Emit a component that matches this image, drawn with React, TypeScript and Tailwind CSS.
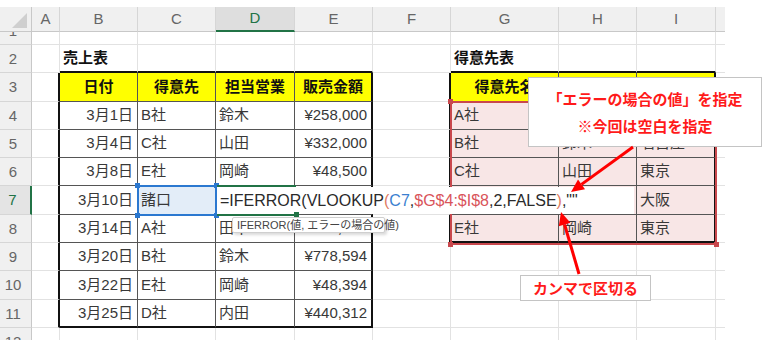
import React from 'react';
import clsx from 'clsx';

type Cell = { t: string; a?: 'l' | 'r' | 'c'; b?: boolean };

const LETTERS = ['', 'A', 'B', 'C', 'D', 'E', 'F', 'G', 'H', 'I', ''];

const data: Record<string, Cell> = {
  '2-2': { t: '売上表', b: true },
  '2-7': { t: '得意先表', b: true },
  '3-2': { t: '日付', a: 'c', b: true },
  '3-3': { t: '得意先', a: 'c', b: true },
  '3-4': { t: '担当営業', a: 'c', b: true },
  '3-5': { t: '販売金額', a: 'c', b: true },
  '3-7': { t: '得意先名', a: 'c', b: true },
};

const t1: [string, string, string, string][] = [
  ['3月1日', 'B社', '鈴木', '¥258,000'],
  ['3月4日', 'C社', '山田', '¥332,000'],
  ['3月8日', 'E社', '岡崎', '¥48,500'],
  ['3月10日', '諸口', '', ''],
  ['3月14日', 'A社', '田中', '¥597,280'],
  ['3月20日', 'B社', '鈴木', '¥778,594'],
  ['3月22日', 'E社', '岡崎', '¥48,394'],
  ['3月25日', 'D社', '内田', '¥440,312'],
];
t1.forEach((row, i) => {
  const r = i + 4;
  data[`${r}-2`] = { t: row[0], a: 'r' };
  data[`${r}-3`] = { t: row[1] };
  data[`${r}-4`] = { t: row[2] };
  data[`${r}-5`] = { t: row[3], a: 'r' };
});
const t2: [string, string, string][] = [
  ['A社', '', ''],
  ['B社', '鈴木', '名古屋'],
  ['C社', '山田', '東京'],
  ['', '', '大阪'],
  ['E社', '岡崎', '東京'],
];
t2.forEach((row, i) => {
  const r = i + 4;
  if (row[0]) data[`${r}-7`] = { t: row[0] };
  if (row[1]) data[`${r}-8`] = { t: row[1] };
  if (row[2]) data[`${r}-9`] = { t: row[2] };
});

function rightBorder(r: number, c: number): string {
  if (c === 10) return '';
  if (c === 0) return r === 7 ? 'border-r-2 border-r-[#217346]' : 'border-r border-r-[#c8c8c8]';
  if (r === 0) return 'border-r border-r-[#d6d6d6]';
  if (r >= 3 && r <= 11 && (c === 1 || c === 5)) return 'border-r-2 border-r-[#111111]';
  if (r >= 3 && r <= 11 && c >= 2 && c <= 4) return 'border-r border-r-[#555555]';
  if (r >= 3 && r <= 8 && (c === 6 || c === 9)) return 'border-r-2 border-r-[#111111]';
  if (r >= 3 && r <= 8 && (c === 7 || c === 8)) return 'border-r border-r-[#555555]';
  return 'border-r border-r-[#e2e2e2]';
}

function bottomBorder(r: number, c: number): string {
  if (r === 0) return c === 4 ? 'border-b-2 border-b-[#217346]' : 'border-b border-b-[#c8c8c8]';
  if (r === 12) return '';
  if (c === 0) return 'border-b border-b-[#d6d6d6]';
  if (c >= 2 && c <= 5 && (r === 2 || r === 11)) return 'border-b-2 border-b-[#111111]';
  if (c >= 2 && c <= 5 && r >= 3 && r <= 10) return 'border-b border-b-[#555555]';
  if (c >= 7 && c <= 9 && (r === 2 || r === 8)) return 'border-b-2 border-b-[#111111]';
  if (c >= 7 && c <= 9 && r >= 3 && r <= 7) return 'border-b border-b-[#555555]';
  return 'border-b border-b-[#e2e2e2]';
}

function bg(r: number, c: number): string {
  if (r === 0 && c === 4) return 'bg-[#dedede]';
  if (c === 0 && r === 7) return 'bg-[#e4e4e4]';
  if (r === 0 || c === 0) return 'bg-[#f0f0f0]';
  if (r === 3 && ((c >= 2 && c <= 5) || (c >= 7 && c <= 9))) return 'bg-[#ffff00]';
  if (r >= 4 && r <= 8 && c >= 7 && c <= 9) return 'bg-[#f8e6e6]';
  if (r === 7 && c === 3) return 'bg-[#e3edf8]';
  return 'bg-white';
}

function CellView({ r, c }: { r: number; c: number }) {
  const cls = clsx('relative overflow-hidden', rightBorder(r, c), bottomBorder(r, c), bg(r, c));
  if (r === 0) {
    if (c === 0) {
      return (
        <div className={cls}>
          <svg width="32" height="25">
            <polygon points="27,6 27,21 12,21" fill="#cfcfcf" />
          </svg>
        </div>
      );
    }
    return (
      <div className={cls}>
        <div
          className={clsx(
            'flex h-full items-center justify-center text-[15px]',
            c === 4 ? 'text-[#217346]' : 'text-[#666666]'
          )}
        >
          {LETTERS[c]}
        </div>
      </div>
    );
  }
  if (c === 0) {
    return (
      <div className={cls}>
        <div
          className={clsx(
            'flex h-[28px] items-center justify-center pr-[5px] text-[15px]',
            r === 1 ? '-mt-[15px]' : '',
            r === 7 ? 'text-[#217346]' : 'text-[#666666]'
          )}
        >
          {r}
        </div>
      </div>
    );
  }
  const d = data[`${r}-${c}`];
  if (!d) return <div className={cls} />;
  return (
    <div className={cls}>
      <div
        className={clsx(
          'flex h-full items-center whitespace-nowrap text-[15px]',
          d.a === 'r' ? 'justify-end pr-[4px]' : d.a === 'c' ? 'justify-center' : 'justify-start pl-[3px]',
          d.b ? 'font-bold text-[#111111]' : 'text-[#383838]'
        )}
      >
        {d.t}
      </div>
    </div>
  );
}

function Handles({ color }: { color: string }) {
  return (
    <>
      <div className={clsx('absolute -left-[4px] -top-[4px] h-[5px] w-[5px]', color)} />
      <div className={clsx('absolute -right-[4px] -top-[4px] h-[5px] w-[5px]', color)} />
      <div className={clsx('absolute -bottom-[4px] -left-[4px] h-[5px] w-[5px]', color)} />
      <div className={clsx('absolute -bottom-[4px] -right-[4px] h-[5px] w-[5px]', color)} />
    </>
  );
}

export default function App() {
  const rows = Array.from({ length: 13 }, (_, i) => i);
  const cols = Array.from({ length: 11 }, (_, i) => i);
  return (
    <div className="relative h-[351px] w-[768px] overflow-hidden bg-white pt-[7px] font-['Liberation_Sans','Noto_Sans_CJK_JP',sans-serif]">
      <div className="grid w-[725px] grid-cols-[32px_28px_78px_78px_79px_78px_78px_108px_78px_79px_9px] grid-rows-[25px_13px_28px_29px_28px_28px_28px_29px_28px_28px_29px_28px_12px]">
        {rows.map((r) => cols.map((c) => <CellView key={`${r}-${c}`} r={r} c={c} />))}
      </div>

      {/* reference range G4:I8 */}
      <div className="absolute left-[450px] top-[101px] h-[144px] w-[267px] border-2 border-[#c9484d]">
        <Handles color="bg-[#c9484d]" />
      </div>

      {/* C7 reference */}
      <div className="absolute left-[137px] top-[185px] h-[31px] w-[80px] border-2 border-[#2b78d0]">
        <Handles color="bg-[#2b78d0]" />
      </div>

      {/* formula edit box over D7:H7 */}
      <div className="absolute left-[217px] top-[185px] flex h-[31px] w-[417px]">
        <div className="relative h-full w-[79px] shrink-0 border-y-2 border-[#217346] bg-white">
          <div className="absolute -bottom-[3px] -right-[3px] h-[5px] w-[5px] bg-[#217346]" />
        </div>
        <div className="my-[2px] flex-1 bg-white" />
      </div>
      <div className="absolute left-[218px] top-[187px] flex h-[27px] items-center pl-[2px] text-[16px] whitespace-nowrap text-[#2a2a2a]">
        <span>=IFERROR(VLOOKUP</span>
        <span className="text-[#e07a5f]">(</span>
        <span className="text-[#3b7fd0]">C7</span>
        <span>,</span>
        <span className="text-[#d9545a]">$G$4:$I$8</span>
        <span>,2,FALSE</span>
        <span className="text-[#e07a5f]">)</span>
        <span>,""</span>
      </div>

      {/* tooltip */}
      <div className="absolute left-[232px] top-[217px] flex h-[16px] w-[153px] items-center rounded-[2px] border border-[#cfcfcf] bg-white pl-[4px] text-[11px] whitespace-nowrap text-[#444444] shadow-[2px_2px_3px_rgba(0,0,0,0.15)]">
        IFERROR(値, エラーの場合の値)
      </div>

      {/* callout 1 */}
      <div className="absolute left-[528px] top-[77px] flex h-[70px] w-[234px] flex-col items-center justify-center border border-[#c4c4c4] bg-white font-['Noto_Sans_CJK_JP',sans-serif] text-[15px] font-bold leading-[27px] text-[#ff1a1a]">
        <div>「エラーの場合の値」を指定</div>
        <div>※今回は空白を指定</div>
      </div>

      {/* callout 2 */}
      <div className="absolute left-[520px] top-[275px] flex h-[26px] w-[131px] items-center justify-center border border-[#c4c4c4] bg-white font-['Noto_Sans_CJK_JP',sans-serif] text-[15px] font-bold text-[#ff1a1a]">
        カンマで区切る
      </div>

      {/* arrows */}
      <svg className="pointer-events-none absolute left-0 top-0" width="768" height="351">
        <line x1="633" y1="147" x2="581.5" y2="184.4" stroke="#ff0000" strokeWidth="3" />
        <polygon points="571,192 578,179.5 585,189.3" fill="#ff0000" />
        <line x1="579" y1="274" x2="564.6" y2="224.5" stroke="#ff0000" strokeWidth="3" />
        <polygon points="561,212 570.4,222.8 558.8,226.2" fill="#ff0000" />
      </svg>
    </div>
  );
}
